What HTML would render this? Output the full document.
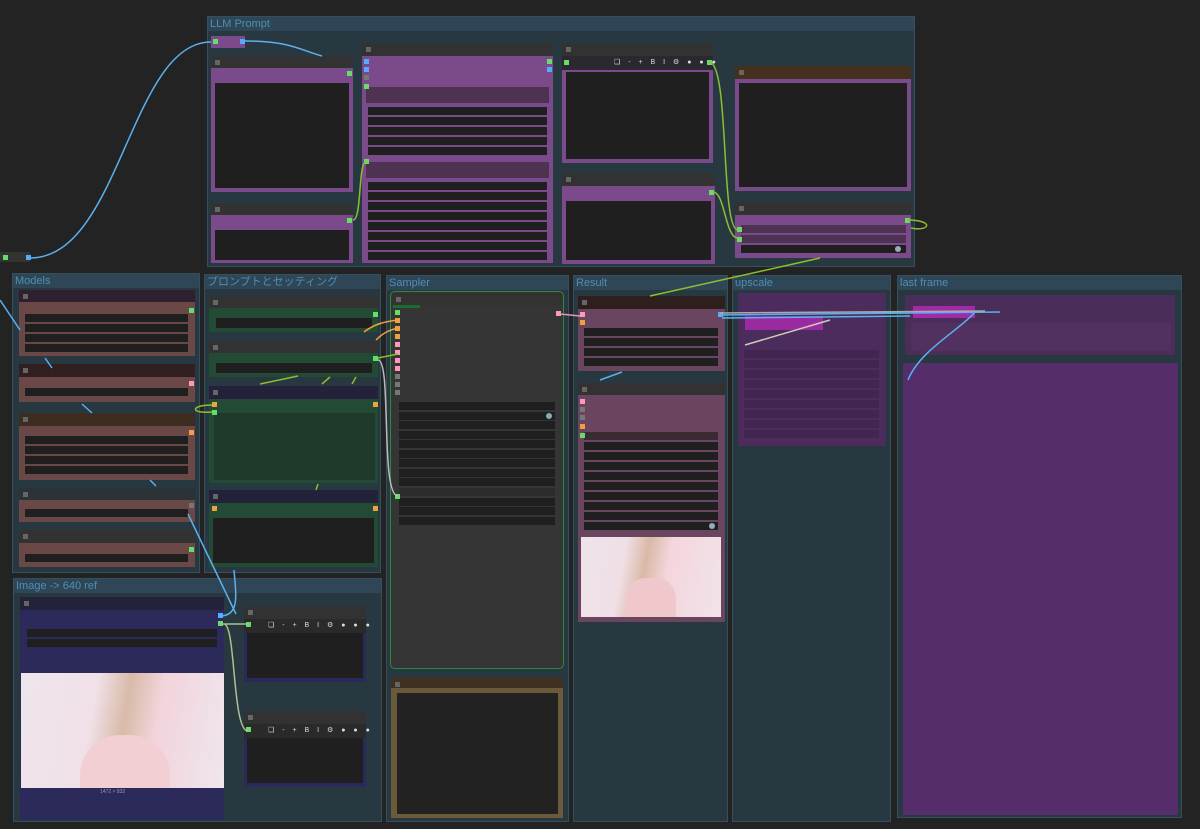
<!DOCTYPE html>
<html><head><meta charset="utf-8"><style>
*{margin:0;padding:0;box-sizing:border-box}
body{width:1200px;height:829px;background:#232323;position:relative;overflow:hidden;font-family:"Liberation Sans","Noto Sans CJK JP",sans-serif}
div{position:absolute}
.g{background:#283840;border:1px solid #34505f}
.gh{left:0;top:0;right:0;height:14px;background:#2e4656;color:#4e8fb5;font-size:11px;line-height:14px;padding-left:2px;white-space:nowrap}
.t{background:#323232}
.t::before,.ic::before{content:"";position:absolute;left:4px;top:4px;width:5px;height:5px;background:#666}
.d{background:#1f1f1f}
.p{background:#7b4a8a}
.b{background:#6a4848}
.gr{background:#234a35}
.rs{background:#6a4560}
.s{width:5px;height:5px}
.G{background:#6d6}.B{background:#5af}.O{background:#f0a040}.P{background:#f9b}.Y{background:#777}
.tb{color:#ddd;font-size:7px;line-height:12px;letter-spacing:3px;white-space:nowrap}
</style></head><body>

<div class="g" style="left:207px;top:16px;width:708px;height:251px"><div class="gh">LLM Prompt</div></div>
<div class="g" style="left:12px;top:273px;width:188px;height:300px"><div class="gh">Models</div></div>
<div class="g" style="left:204px;top:274px;width:177px;height:299px"><div class="gh">プロンプトとセッティング</div></div>
<div class="g" style="left:386px;top:275px;width:183px;height:547px"><div class="gh">Sampler</div></div>
<div class="g" style="left:573px;top:275px;width:155px;height:547px"><div class="gh">Result</div></div>
<div class="g" style="left:732px;top:275px;width:159px;height:547px"><div class="gh">upscale</div></div>
<div class="g" style="left:897px;top:275px;width:285px;height:543px"><div class="gh">last frame</div></div>
<div class="g" style="left:13px;top:578px;width:369px;height:244px"><div class="gh">Image -&gt; 640 ref</div></div>

<div style="left:0;top:252px;width:30px;height:10px;background:#333"></div>

<!-- LLM nodes -->
<div class="p" style="left:211px;top:36px;width:34px;height:12px"></div>
<div class="t" style="left:211px;top:56px;width:142px;height:12px"></div>
<div class="p" style="left:211px;top:68px;width:142px;height:124px"></div>
<div class="d" style="left:215px;top:83px;width:134px;height:105px"></div>
<div class="t" style="left:211px;top:203px;width:142px;height:12px"></div>
<div class="p" style="left:211px;top:215px;width:142px;height:48px"></div>
<div class="d" style="left:215px;top:230px;width:134px;height:30px"></div>

<div class="t" style="left:362px;top:43px;width:191px;height:13px"></div>
<div class="p" style="left:362px;top:56px;width:191px;height:207px"></div>
<div style="left:366px;top:87px;width:183px;height:16px;background:#4e3252"></div>
<div class="d" style="left:368px;top:107px;width:179px;height:8px"></div>
<div class="d" style="left:368px;top:117px;width:179px;height:8px"></div>
<div class="d" style="left:368px;top:127px;width:179px;height:8px"></div>
<div class="d" style="left:368px;top:137px;width:179px;height:8px"></div>
<div class="d" style="left:368px;top:147px;width:179px;height:8px"></div>
<div style="left:366px;top:162px;width:183px;height:16px;background:#4e3252"></div>
<div class="d" style="left:368px;top:182px;width:179px;height:8px"></div>
<div class="d" style="left:368px;top:192px;width:179px;height:8px"></div>
<div class="d" style="left:368px;top:202px;width:179px;height:8px"></div>
<div class="d" style="left:368px;top:212px;width:179px;height:8px"></div>
<div class="d" style="left:368px;top:222px;width:179px;height:8px"></div>
<div class="d" style="left:368px;top:232px;width:179px;height:8px"></div>
<div class="d" style="left:368px;top:242px;width:179px;height:8px"></div>
<div class="d" style="left:368px;top:252px;width:179px;height:8px"></div>

<div class="t" style="left:562px;top:43px;width:151px;height:13px"></div>
<div style="left:562px;top:56px;width:151px;height:14px;background:#2c2830"></div>
<div class="tb" style="left:614px;top:57px">❏ - + B I ⚙ ● ● ●</div>
<div class="p" style="left:562px;top:70px;width:151px;height:93px"></div>
<div class="d" style="left:566px;top:72px;width:143px;height:87px"></div>
<div class="t" style="left:562px;top:173px;width:153px;height:13px"></div>
<div class="p" style="left:562px;top:186px;width:153px;height:78px"></div>
<div class="d" style="left:566px;top:201px;width:145px;height:59px"></div>

<div class="ic" style="left:735px;top:66px;width:176px;height:13px;background:#45301f"></div>
<div class="p" style="left:735px;top:79px;width:176px;height:112px"></div>
<div class="d" style="left:739px;top:83px;width:168px;height:104px"></div>
<div class="t" style="left:735px;top:202px;width:176px;height:13px"></div>
<div class="p" style="left:735px;top:215px;width:176px;height:43px"></div>
<div style="left:741px;top:225px;width:165px;height:8px;background:#4e3252"></div>
<div style="left:741px;top:235px;width:165px;height:8px;background:#4e3252"></div>
<div class="d" style="left:741px;top:245px;width:165px;height:8px"></div>
<div style="left:895px;top:246px;width:6px;height:6px;border-radius:3px;background:#9ab"></div>

<!-- Models -->
<div class="ic" style="left:19px;top:290px;width:176px;height:12px;background:#2f2030"></div>
<div class="b" style="left:19px;top:302px;width:176px;height:54px"></div>
<div class="d" style="left:25px;top:314px;width:163px;height:8px"></div>
<div class="d" style="left:25px;top:324px;width:163px;height:8px"></div>
<div class="d" style="left:25px;top:334px;width:163px;height:8px"></div>
<div class="d" style="left:25px;top:344px;width:163px;height:8px"></div>
<div class="ic" style="left:19px;top:364px;width:176px;height:13px;background:#321f1f"></div>
<div class="b" style="left:19px;top:377px;width:176px;height:25px"></div>
<div class="d" style="left:25px;top:388px;width:163px;height:8px"></div>
<div class="ic" style="left:19px;top:413px;width:176px;height:13px;background:#3d2c20"></div>
<div class="b" style="left:19px;top:426px;width:176px;height:54px"></div>
<div class="d" style="left:25px;top:436px;width:163px;height:8px"></div>
<div class="d" style="left:25px;top:446px;width:163px;height:8px"></div>
<div class="d" style="left:25px;top:456px;width:163px;height:8px"></div>
<div class="d" style="left:25px;top:466px;width:163px;height:8px"></div>
<div class="ic" style="left:19px;top:488px;width:176px;height:12px;background:#2b3338"></div>
<div class="b" style="left:19px;top:500px;width:176px;height:22px"></div>
<div class="d" style="left:25px;top:509px;width:163px;height:8px"></div>
<div class="t" style="left:19px;top:530px;width:176px;height:13px"></div>
<div class="b" style="left:19px;top:543px;width:176px;height:24px"></div>
<div class="d" style="left:25px;top:554px;width:163px;height:8px"></div>

<!-- Prompt -->
<div class="t" style="left:209px;top:296px;width:169px;height:12px"></div>
<div class="gr" style="left:209px;top:308px;width:169px;height:24px"></div>
<div class="d" style="left:216px;top:318px;width:156px;height:10px"></div>
<div class="t" style="left:209px;top:341px;width:169px;height:12px"></div>
<div class="gr" style="left:209px;top:353px;width:169px;height:24px"></div>
<div class="d" style="left:216px;top:363px;width:156px;height:10px"></div>
<div class="ic" style="left:209px;top:386px;width:169px;height:13px;background:#24223a"></div>
<div class="gr" style="left:209px;top:399px;width:169px;height:84px"></div>
<div style="left:214px;top:413px;width:161px;height:67px;background:#1f3a2a"></div>
<div class="ic" style="left:209px;top:490px;width:169px;height:13px;background:#24223a"></div>
<div class="gr" style="left:209px;top:503px;width:169px;height:64px"></div>
<div class="d" style="left:213px;top:518px;width:161px;height:45px"></div>

<!-- Sampler -->
<div style="left:390px;top:291px;width:174px;height:378px;background:#353535;border:1px solid #2a8a3a;border-radius:5px"></div>
<div class="t" style="left:392px;top:293px;width:170px;height:12px"></div>
<div style="left:393px;top:305px;width:27px;height:3px;background:#1e6a30"></div>
<div class="d" style="left:399px;top:402px;width:156px;height:8px"></div>
<div class="d" style="left:399px;top:412px;width:156px;height:8px"></div>
<div class="d" style="left:399px;top:421px;width:156px;height:8px"></div>
<div class="d" style="left:399px;top:431px;width:156px;height:8px"></div>
<div class="d" style="left:399px;top:440px;width:156px;height:8px"></div>
<div class="d" style="left:399px;top:450px;width:156px;height:8px"></div>
<div class="d" style="left:399px;top:459px;width:156px;height:8px"></div>
<div class="d" style="left:399px;top:469px;width:156px;height:8px"></div>
<div class="d" style="left:399px;top:478px;width:156px;height:8px"></div>
<div style="left:399px;top:488px;width:156px;height:8px;background:#2c2c2c"></div>
<div class="d" style="left:399px;top:498px;width:156px;height:8px"></div>
<div class="d" style="left:399px;top:507px;width:156px;height:8px"></div>
<div class="d" style="left:399px;top:517px;width:156px;height:8px"></div>
<div style="left:546px;top:413px;width:6px;height:6px;border-radius:3px;background:#8ab"></div>
<div class="ic" style="left:391px;top:678px;width:172px;height:10px;background:#40301f"></div>
<div style="left:391px;top:688px;width:172px;height:130px;background:#6b5a3a"></div>
<div style="left:397px;top:693px;width:161px;height:121px;background:#222"></div>

<!-- Result -->
<div class="ic" style="left:578px;top:296px;width:147px;height:13px;background:#2e1f1f"></div>
<div class="rs" style="left:578px;top:309px;width:147px;height:62px"></div>
<div class="d" style="left:584px;top:328px;width:134px;height:8px"></div>
<div class="d" style="left:584px;top:338px;width:134px;height:8px"></div>
<div class="d" style="left:584px;top:348px;width:134px;height:8px"></div>
<div class="d" style="left:584px;top:358px;width:134px;height:8px"></div>
<div class="t" style="left:578px;top:383px;width:147px;height:12px"></div>
<div class="rs" style="left:578px;top:395px;width:147px;height:227px"></div>
<div style="left:584px;top:432px;width:134px;height:8px;background:#3a2a33"></div>
<div class="d" style="left:584px;top:442px;width:134px;height:8px"></div>
<div class="d" style="left:584px;top:452px;width:134px;height:8px"></div>
<div class="d" style="left:584px;top:462px;width:134px;height:8px"></div>
<div class="d" style="left:584px;top:472px;width:134px;height:8px"></div>
<div class="d" style="left:584px;top:482px;width:134px;height:8px"></div>
<div class="d" style="left:584px;top:492px;width:134px;height:8px"></div>
<div class="d" style="left:584px;top:502px;width:134px;height:8px"></div>
<div class="d" style="left:584px;top:512px;width:134px;height:8px"></div>
<div class="d" style="left:584px;top:522px;width:134px;height:8px"></div>
<div style="left:709px;top:523px;width:6px;height:6px;border-radius:3px;background:#9ab"></div>
<div style="left:581px;top:537px;width:140px;height:80px;background:linear-gradient(100deg,#ede4ea 0%,#f0dfe6 30%,#d9b9a6 45%,#f4d6dc 60%,#f1e3ea 100%)"></div>
<div style="left:626px;top:578px;width:50px;height:39px;background:#f0c8cc;border-radius:20px 20px 0 0"></div>

<!-- upscale -->
<div style="left:738px;top:293px;width:148px;height:153px;background:#4b2c5c"></div>
<div style="left:745px;top:316px;width:78px;height:14px;background:#9a2aa0"></div>
<div style="left:744px;top:350px;width:135px;height:8px;background:#42264f"></div>
<div style="left:744px;top:360px;width:135px;height:8px;background:#42264f"></div>
<div style="left:744px;top:370px;width:135px;height:8px;background:#42264f"></div>
<div style="left:744px;top:380px;width:135px;height:8px;background:#42264f"></div>
<div style="left:744px;top:390px;width:135px;height:8px;background:#42264f"></div>
<div style="left:744px;top:400px;width:135px;height:8px;background:#42264f"></div>
<div style="left:744px;top:410px;width:135px;height:8px;background:#42264f"></div>
<div style="left:744px;top:420px;width:135px;height:8px;background:#42264f"></div>
<div style="left:744px;top:430px;width:135px;height:8px;background:#42264f"></div>

<!-- last frame -->
<div style="left:905px;top:295px;width:270px;height:60px;background:#4b2d5a"></div>
<div style="left:913px;top:306px;width:62px;height:12px;background:#a02aa8"></div>
<div style="left:911px;top:323px;width:260px;height:28px;background:#52305f"></div>
<div style="left:903px;top:363px;width:275px;height:452px;background:#552d6a"></div>

<!-- Image group -->
<div class="ic" style="left:20px;top:597px;width:204px;height:13px;background:#22223a"></div>
<div style="left:20px;top:610px;width:204px;height:210px;background:#2b2a5a"></div>
<div class="d" style="left:27px;top:629px;width:190px;height:8px"></div>
<div class="d" style="left:27px;top:639px;width:190px;height:8px"></div>
<div style="left:21px;top:673px;width:203px;height:115px;background:linear-gradient(100deg,#eee6ec 0%,#f1e0e8 35%,#d8bba8 50%,#f2d4dc 65%,#efe6ee 100%)"></div>
<div style="left:80px;top:735px;width:90px;height:53px;background:#f2cfd2;border-radius:40px 40px 0 0"></div>
<div style="left:100px;top:789px;color:#99a;font-size:5px">1472 × 832</div>

<div class="t" style="left:244px;top:606px;width:122px;height:13px"></div>
<div style="left:244px;top:619px;width:122px;height:14px;background:#2a2a2a"></div>
<div class="tb" style="left:268px;top:620px">❏ - + B I ⚙ ● ● ●</div>
<div style="left:244px;top:633px;width:122px;height:49px;background:#2a2a5a"></div>
<div class="d" style="left:247px;top:633px;width:116px;height:45px"></div>
<div class="t" style="left:244px;top:711px;width:122px;height:13px"></div>
<div style="left:244px;top:724px;width:122px;height:14px;background:#2a2a2a"></div>
<div class="tb" style="left:268px;top:725px">❏ - + B I ⚙ ● ● ●</div>
<div style="left:244px;top:738px;width:122px;height:49px;background:#2a2a5a"></div>
<div class="d" style="left:247px;top:738px;width:116px;height:45px"></div>

<!-- sockets -->
<div class="s G" style="left:3px;top:255px"></div><div class="s B" style="left:26px;top:255px"></div>
<div class="s G" style="left:213px;top:39px"></div><div class="s B" style="left:240px;top:39px"></div>
<div class="s G" style="left:347px;top:71px"></div><div class="s G" style="left:347px;top:218px"></div>
<div class="s B" style="left:364px;top:59px"></div><div class="s B" style="left:364px;top:67px"></div><div class="s Y" style="left:364px;top:75px"></div><div class="s G" style="left:364px;top:84px"></div><div class="s G" style="left:364px;top:159px"></div>
<div class="s G" style="left:547px;top:59px"></div><div class="s B" style="left:547px;top:67px"></div>
<div class="s G" style="left:564px;top:60px"></div><div class="s G" style="left:707px;top:60px"></div><div class="s G" style="left:709px;top:190px"></div>
<div class="s G" style="left:737px;top:227px"></div><div class="s G" style="left:737px;top:237px"></div><div class="s G" style="left:905px;top:218px"></div>
<div class="s G" style="left:189px;top:308px"></div><div class="s P" style="left:189px;top:381px"></div><div class="s O" style="left:189px;top:430px"></div><div class="s Y" style="left:189px;top:503px"></div><div class="s G" style="left:189px;top:547px"></div>
<div class="s G" style="left:373px;top:312px"></div><div class="s G" style="left:373px;top:356px"></div>
<div class="s O" style="left:212px;top:402px"></div><div class="s G" style="left:212px;top:410px"></div><div class="s O" style="left:373px;top:402px"></div>
<div class="s O" style="left:212px;top:506px"></div><div class="s O" style="left:373px;top:506px"></div>
<div class="s G" style="left:395px;top:310px"></div><div class="s O" style="left:395px;top:318px"></div><div class="s O" style="left:395px;top:326px"></div><div class="s O" style="left:395px;top:334px"></div>
<div class="s P" style="left:395px;top:342px"></div><div class="s P" style="left:395px;top:350px"></div><div class="s P" style="left:395px;top:358px"></div><div class="s P" style="left:395px;top:366px"></div>
<div class="s Y" style="left:395px;top:374px"></div><div class="s Y" style="left:395px;top:382px"></div><div class="s Y" style="left:395px;top:390px"></div><div class="s G" style="left:395px;top:494px"></div>
<div class="s P" style="left:556px;top:311px"></div>
<div class="s P" style="left:580px;top:312px"></div><div class="s O" style="left:580px;top:320px"></div><div class="s B" style="left:718px;top:312px"></div>
<div class="s P" style="left:580px;top:399px"></div><div class="s Y" style="left:580px;top:407px"></div><div class="s Y" style="left:580px;top:415px"></div><div class="s O" style="left:580px;top:424px"></div><div class="s G" style="left:580px;top:433px"></div>
<div class="s B" style="left:218px;top:613px"></div><div class="s G" style="left:218px;top:621px"></div>
<div class="s G" style="left:246px;top:622px"></div><div class="s G" style="left:246px;top:727px"></div>

<!-- links -->
<svg style="position:absolute;left:0;top:0" width="1200" height="829" fill="none" stroke-width="1.5">
<path d="M30 258 C120 258 130 42 211 42" stroke="#5ab0f0"/>
<path d="M245 41 C290 41 300 50 322 56" stroke="#5ab0f0"/>
<path d="M0 300 L20 330 M45 358 L52 368 M82 404 L92 413 M150 480 L156 486 M188 514 L236 614" stroke="#5ab0f0"/>
<path d="M353 220 C362 220 358 162 366 162" stroke="#8ac030"/>
<path d="M709 62 C730 62 720 230 738 230" stroke="#8ac030"/>
<path d="M713 192 C725 192 725 238 738 238" stroke="#8ac030"/>
<path d="M907 220 C935 220 930 232 911 228" stroke="#8ac030"/>
<path d="M820 258 L650 296" stroke="#8ac030"/>
<path d="M260 384 L298 376 M322 384 L330 377 M352 384 L356 377 M316 490 L318 484" stroke="#8ac030"/>
<path d="M364 332 C372 326 380 322 398 320 M376 340 C384 332 390 330 398 328" stroke="#f0a040"/>
<path d="M378 358 L398 354" stroke="#8ac030"/>
<path d="M378 360 C392 360 380 496 398 496" stroke="#bbb"/>
<path d="M212 405 C190 405 190 414 212 412" stroke="#8ac030"/>
<path d="M560 314 L580 316" stroke="#d9a"/>
<path d="M720 315 L1000 312 M722 318 L910 316" stroke="#5ab0f0"/>
<path d="M720 313 L985 311" stroke="#aaa"/>
<path d="M745 345 L830 320" stroke="#ccb"/>
<path d="M975 312 C960 330 920 350 908 380" stroke="#5ab0f0"/>
<path d="M600 380 L622 372" stroke="#5ab0f0"/>
<path d="M220 616 C240 616 236 595 234 570" stroke="#5ab0f0"/>
<path d="M222 624 C240 624 238 624 248 624 M224 624 C236 624 232 731 248 731" stroke="#aac090"/>
</svg>
</body></html>
